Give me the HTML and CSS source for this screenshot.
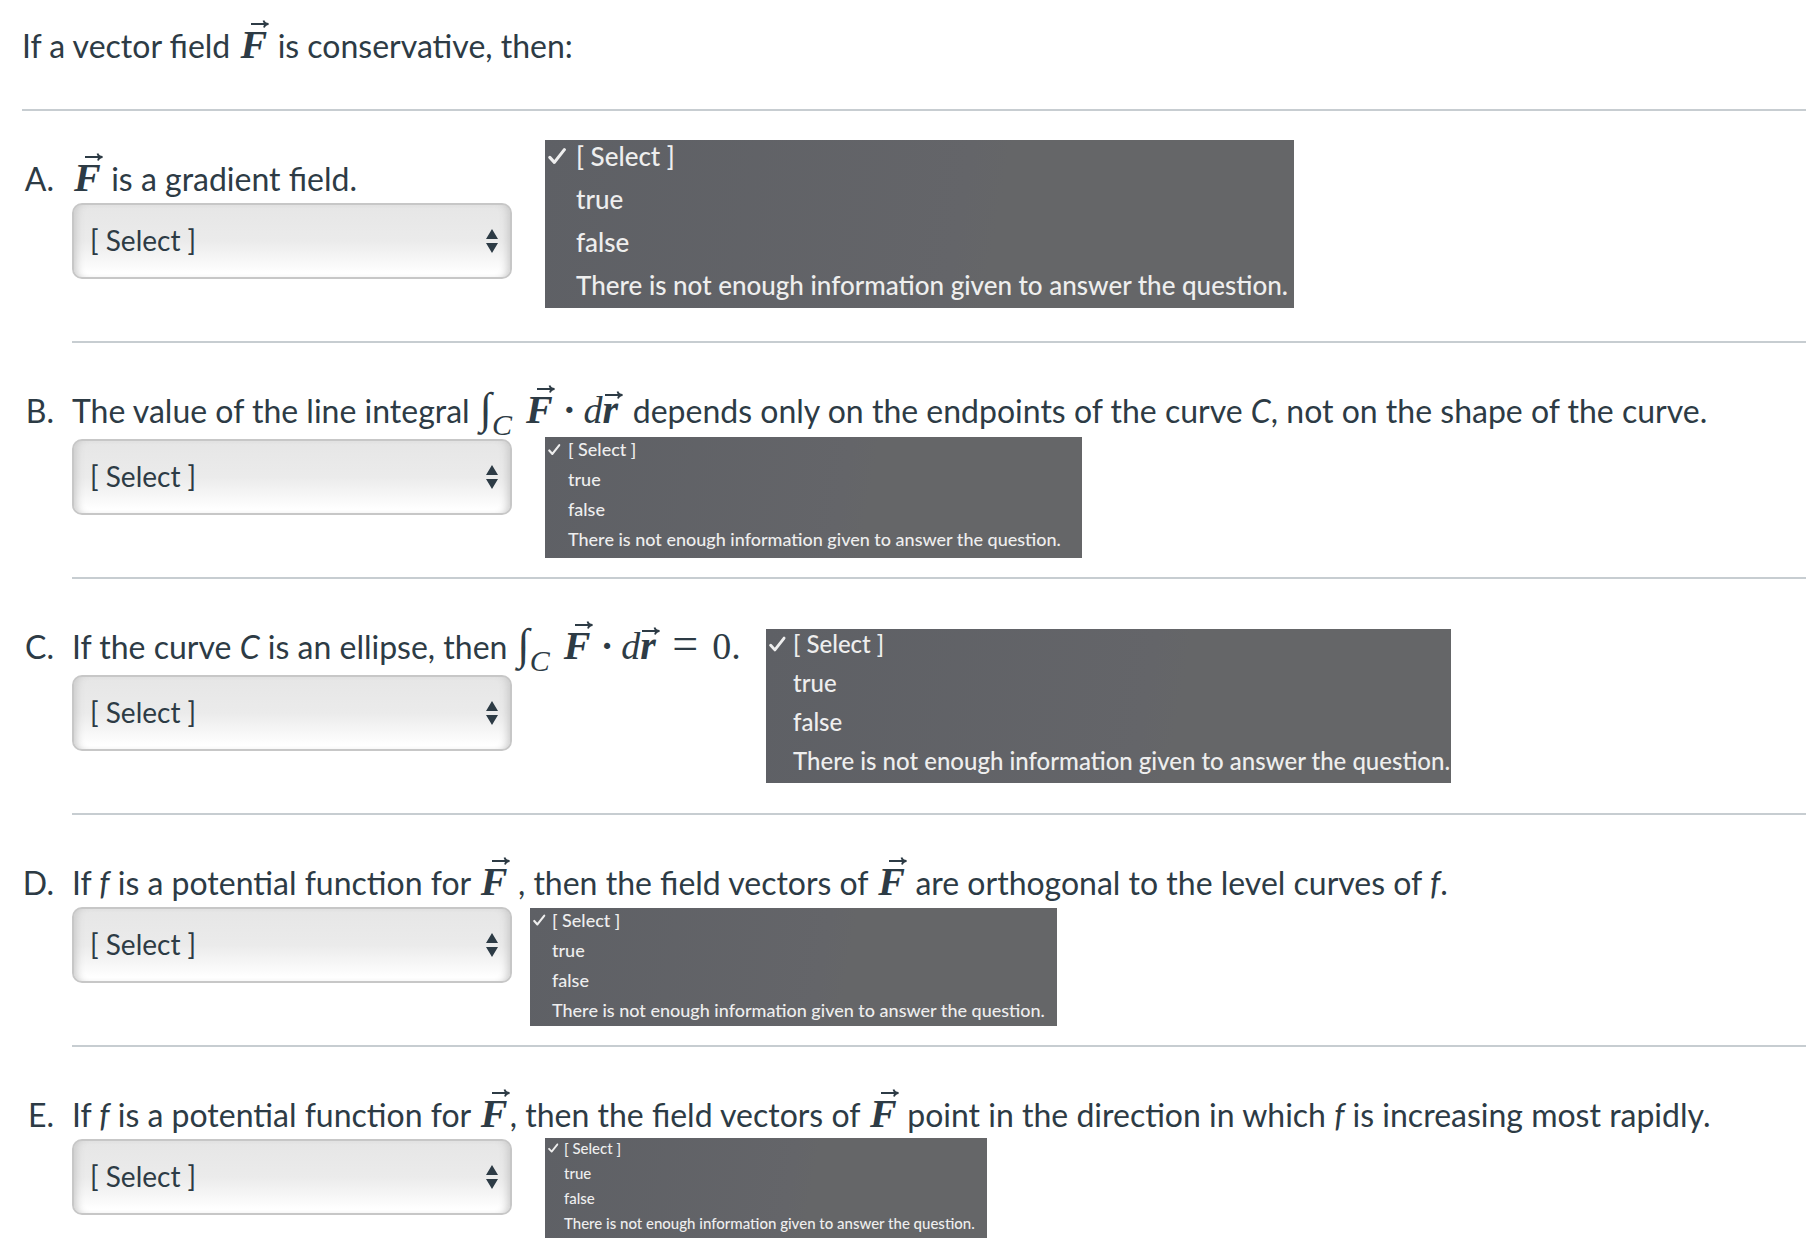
FILE: index.html
```
<!DOCTYPE html>
<html lang="en">
<head>
    <meta charset="UTF-8">
    <meta name="viewport" content="width=device-width, initial-scale=1.0">
    <title>Conservative Vector Fields</title>
    <link rel="stylesheet" href="styles.css">
</head>
<body>
    <!-- Shared icons -->
    <svg class="sprite" width="0" height="0" aria-hidden="true">
        <symbol id="arrow" viewBox="0 0 18 8">
            <path d="M0 4H17M12.5 0.5C13 2.5 14.5 3.7 17.5 4C15 4.3 13.4 5.5 13 7.5" fill="none" stroke="currentColor" stroke-width="1.8"/>
        </symbol>
        <symbol id="updown" viewBox="0 0 12 24">
            <path d="M6 0L12 10H0ZM0 14H12L6 24Z" fill="currentColor"/>
        </symbol>
        <symbol id="check" viewBox="0 0 20 18">
            <path d="M2 10.5L7 16L18 2" fill="none" stroke="currentColor" stroke-width="3.4" stroke-linecap="round" stroke-linejoin="round"/>
        </symbol>
    </svg>

    <main class="question">
        <p class="intro">If a vector field <span class="vec">F<svg><use href="#arrow"/></svg></span> is conservative, then:</p>

        <div class="parts">
            <section class="part">
                <span class="letter">A.</span>
                <div class="content">
                    <label class="prompt" for="answer-a"><span class="vec">F<svg><use href="#arrow"/></svg></span> is a gradient field.</label>
                    <div class="dropdown">
                        <select id="answer-a">
                            <option>[ Select ]</option>
                            <option>true</option>
                            <option>false</option>
                            <option>There is not enough information given to answer the question.</option>
                        </select>
                        <svg class="updown"><use href="#updown"/></svg>
                    </div>
                    <ul class="menu menu-a" role="listbox" aria-label="Choices for A">
                        <li role="option" aria-selected="true"><svg class="check"><use href="#check"/></svg>[ Select ]</li>
                        <li role="option">true</li>
                        <li role="option">false</li>
                        <li role="option">There is not enough information given to answer the question.</li>
                    </ul>
                </div>
            </section>

            <section class="part">
                <span class="letter">B.</span>
                <div class="content">
                    <label class="prompt tall" for="answer-b">The value of the line integral <span class="math"><span class="int">∫</span><sub>C</sub><span class="vec">F<svg><use href="#arrow"/></svg></span><span class="dot">·</span><i>d</i><span class="vec vec-r">r<svg><use href="#arrow"/></svg></span></span> depends only on the endpoints of the curve <em>C</em>, not on the shape of the curve.</label>
                    <div class="dropdown">
                        <select id="answer-b">
                            <option>[ Select ]</option>
                            <option>true</option>
                            <option>false</option>
                            <option>There is not enough information given to answer the question.</option>
                        </select>
                        <svg class="updown"><use href="#updown"/></svg>
                    </div>
                    <ul class="menu menu-b" role="listbox" aria-label="Choices for B">
                        <li role="option" aria-selected="true"><svg class="check"><use href="#check"/></svg>[ Select ]</li>
                        <li role="option">true</li>
                        <li role="option">false</li>
                        <li role="option">There is not enough information given to answer the question.</li>
                    </ul>
                </div>
            </section>

            <section class="part">
                <span class="letter">C.</span>
                <div class="content">
                    <label class="prompt tall" for="answer-c">If the curve <em>C</em> is an ellipse, then <span class="math"><span class="int">∫</span><sub>C</sub><span class="vec">F<svg><use href="#arrow"/></svg></span><span class="dot">·</span><i>d</i><span class="vec vec-r">r<svg><use href="#arrow"/></svg></span><span class="rel">=</span>0.</span></label>
                    <div class="dropdown">
                        <select id="answer-c">
                            <option>[ Select ]</option>
                            <option>true</option>
                            <option>false</option>
                            <option>There is not enough information given to answer the question.</option>
                        </select>
                        <svg class="updown"><use href="#updown"/></svg>
                    </div>
                    <ul class="menu menu-c" role="listbox" aria-label="Choices for C">
                        <li role="option" aria-selected="true"><svg class="check"><use href="#check"/></svg>[ Select ]</li>
                        <li role="option">true</li>
                        <li role="option">false</li>
                        <li role="option">There is not enough information given to answer the question.</li>
                    </ul>
                </div>
            </section>

            <section class="part">
                <span class="letter">D.</span>
                <div class="content">
                    <label class="prompt" for="answer-d">If <em>f</em> is a potential function for <span class="vec">F<svg><use href="#arrow"/></svg></span> , then the field vectors of <span class="vec">F<svg><use href="#arrow"/></svg></span> are orthogonal to the level curves of <em>f</em>.</label>
                    <div class="dropdown">
                        <select id="answer-d">
                            <option>[ Select ]</option>
                            <option>true</option>
                            <option>false</option>
                            <option>There is not enough information given to answer the question.</option>
                        </select>
                        <svg class="updown"><use href="#updown"/></svg>
                    </div>
                    <ul class="menu menu-d" role="listbox" aria-label="Choices for D">
                        <li role="option" aria-selected="true"><svg class="check"><use href="#check"/></svg>[ Select ]</li>
                        <li role="option">true</li>
                        <li role="option">false</li>
                        <li role="option">There is not enough information given to answer the question.</li>
                    </ul>
                </div>
            </section>

            <section class="part">
                <span class="letter">E.</span>
                <div class="content">
                    <label class="prompt" for="answer-e">If <em>f</em> is a potential function for <span class="vec">F<svg><use href="#arrow"/></svg></span>, then the field vectors of <span class="vec">F<svg><use href="#arrow"/></svg></span> point in the direction in which <em>f</em> is increasing most rapidly.</label>
                    <div class="dropdown">
                        <select id="answer-e">
                            <option>[ Select ]</option>
                            <option>true</option>
                            <option>false</option>
                            <option>There is not enough information given to answer the question.</option>
                        </select>
                        <svg class="updown"><use href="#updown"/></svg>
                    </div>
                    <ul class="menu menu-e" role="listbox" aria-label="Choices for E">
                        <li role="option" aria-selected="true"><svg class="check"><use href="#check"/></svg>[ Select ]</li>
                        <li role="option">true</li>
                        <li role="option">false</li>
                        <li role="option">There is not enough information given to answer the question.</li>
                    </ul>
                </div>
            </section>
        </div>
    </main>
</body>
</html>
```
FILE: styles.css
```
/* Basic styling for body */
body {
    margin: 0;
    background-color: #fff;
    color: #2d3b45;
    font-family: Lato, "Liberation Sans", sans-serif;
    font-size: 32px;
    line-height: 40px;
}

.sprite {
    position: absolute;
}

.question {
    padding: 26px 0 0 22px;
}

.intro {
    margin: 0 0 43px;
}

.parts {
    border-top: 2px solid #c7cdd1;
}

/* One lettered statement */
.part {
    display: flex;
    gap: 18px;
}

.letter {
    width: 32px;
    padding-top: 48px;
    text-align: right;
}

.content {
    position: relative;
    flex: 1;
    padding: 48px 0 62px;
    border-bottom: 2px solid #c7cdd1;
}

.part:last-child .content {
    padding-bottom: 24px;
    border-bottom: none;
}

.prompt {
    display: block;
    margin-bottom: 4px;
    white-space: nowrap;
}

.prompt.tall {
    margin-bottom: 8px;
}

/* Math notation */
.math,
.vec {
    font-family: "Liberation Serif", serif;
    font-size: 38px;
    line-height: 1px;
}

.vec {
    position: relative;
    display: inline-block;
    width: 29px;
    margin: 0 0 0 2px;
    font-size: 40px;
    font-weight: bold;
    font-style: italic;
}

.vec svg {
    position: absolute;
    left: 11px;
    top: -24px;
    width: 18px;
    height: 8px;
}

.vec-r {
    width: 18px;
    margin: 0 4px 0 0;
}

.vec-r svg {
    left: 2px;
    top: -18px;
}

.int {
    margin-left: 2px;
    font-size: 44px;
}

.math sub {
    margin-right: 12px;
    font-size: 30px;
    font-style: italic;
    line-height: 1px;
    vertical-align: -12px;
}

.dot {
    margin: 0 8px;
    font-weight: bold;
}

.rel {
    margin: 0 14px 0 10px;
    font-size: 46px;
}

/* Drop-down field */
.dropdown {
    position: relative;
    width: 440px;
}

.dropdown select {
    display: block;
    width: 100%;
    height: 76px;
    padding: 0 16px 2px;
    appearance: none;
    border: 2px solid #c7c7c7;
    border-radius: 10px;
    background: linear-gradient(#e6e6e6, #ebebeb 50%, #fff 95%);
    box-shadow: inset 8px 0 8px -6px #c7c7c7, inset -8px 0 8px -6px #c7c7c7;
    color: inherit;
    font-family: inherit;
    font-size: 28px;
}

.updown {
    position: absolute;
    top: 26px;
    right: 14px;
    width: 12px;
    height: 24px;
    pointer-events: none;
}

/* Open menus, floating over the page */
.menu {
    position: absolute;
    left: 473px;
    display: flex;
    flex-direction: column;
    box-sizing: border-box;
    margin: 0;
    padding: 0;
    list-style: none;
    background: linear-gradient(100deg, #5e6065, #646569 55%, #656668 60%);
    color: #eee;
    font-weight: 500;
    white-space: nowrap;
}

.menu li {
    position: relative;
}

.check {
    position: absolute;
    left: 3px;
    top: 0;
    width: 0.7em;
    height: 100%;
}

.menu-a {
    top: 29px;
    gap: 11px;
    width: 749px;
    height: 168px;
    font-size: 26px;
    line-height: 32px;
}

.menu-a li {
    padding-left: 31px;
}

.menu-b {
    top: 94px;
    gap: 5px;
    width: 537px;
    height: 121px;
    font-size: 18px;
    line-height: 25px;
}

.menu-b li {
    padding-left: 23px;
}

.menu-c {
    top: 50px;
    left: 694px;
    gap: 9px;
    width: 685px;
    height: 154px;
    font-size: 24px;
    line-height: 30px;
}

.menu-c li {
    padding-left: 27px;
}

.menu-d {
    top: 93px;
    left: 458px;
    gap: 6px;
    width: 527px;
    height: 118px;
    font-size: 18px;
    line-height: 24px;
}

.menu-d li {
    padding-left: 22px;
}

.menu-e {
    top: 91px;
    gap: 5px;
    width: 442px;
    height: 100px;
    font-size: 15px;
    line-height: 20px;
}

.menu-e li {
    padding-left: 19px;
}
```
